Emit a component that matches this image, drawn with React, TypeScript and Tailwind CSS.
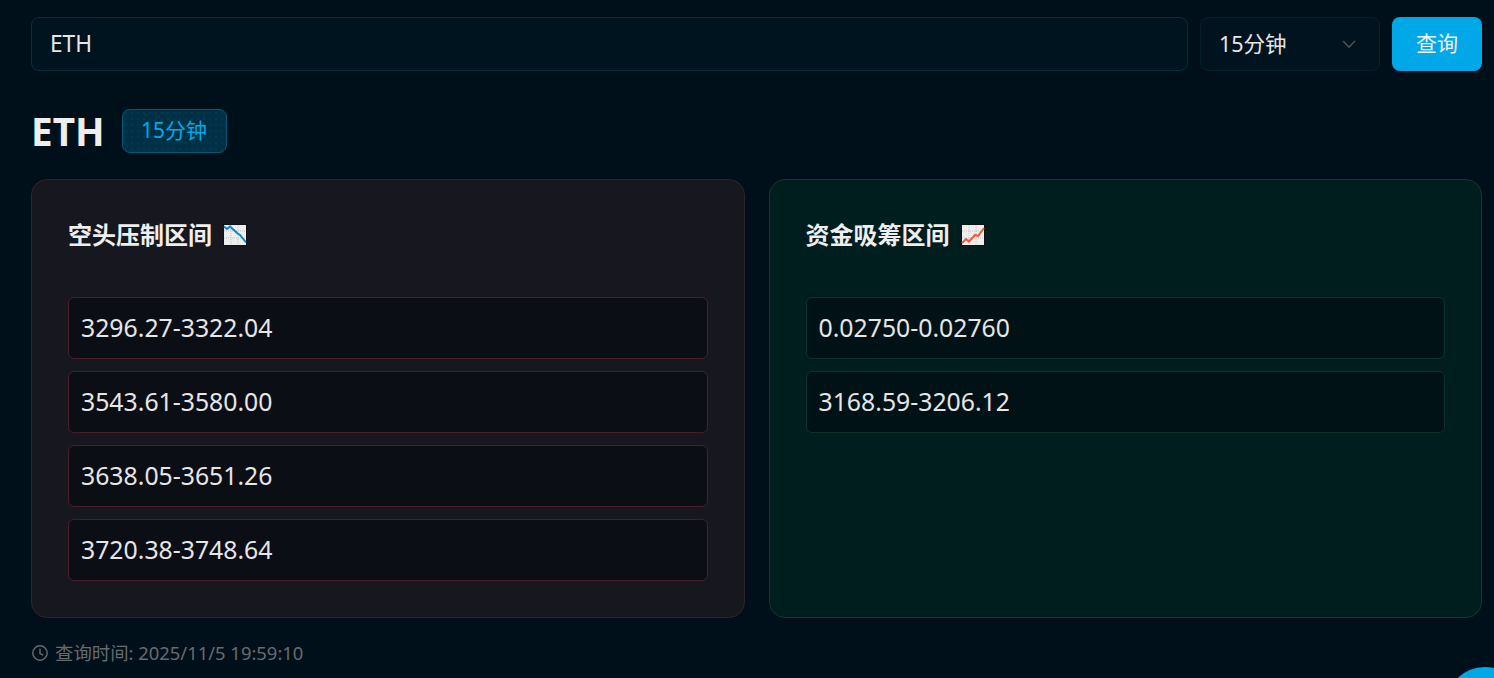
const FONT = "font-['Noto_Sans','Noto_Sans_CJK_SC',sans-serif]";

const shortRanges = ['3296.27-3322.04', '3543.61-3580.00', '3638.05-3651.26', '3720.38-3748.64'];
const longRanges = ['0.02750-0.02760', '3168.59-3206.12'];

function ChartIcon({ up }: { up?: boolean }) {
    return (
        <svg width="24" height="24" viewBox="0 0 24 24" className="shrink-0">
            <rect x="0" y="1" width="24" height="22" fill="#0d0f16" />
            <rect x="1" y="2" width="22" height="20" fill="#eeeeee" />
            <path d="M1 8H23M1 15H23M8 2V22M15 2V22" stroke="#c4c4c4" strokeWidth="1" strokeDasharray="1 1" fill="none" />
            {up ? (
                <path d="M1 20L5 16L8 18.5L14 12L17 13L23 5" stroke="#ee5a3c" strokeWidth="2" fill="none" />
            ) : (
                <path d="M1 3.5L4 6L7 3.5L12 8L14 10L17 12L23 19.5" stroke="#0b86c6" strokeWidth="2" fill="none" />
            )}
        </svg>
    );
}

function RangeCard({
    title,
    ranges,
    up,
}: {
    title: string;
    ranges: string[];
    up?: boolean;
}) {
    return (
        <div
            className={`flex-1 h-[439px] rounded-2xl border px-9 pt-[36px] ${
                up ? 'bg-[#011e1f] border-[#0c3a2d]' : 'bg-[#17171f] border-[#38202a]'
            }`}
        >
            <div className="flex items-center gap-[11px] h-[38px] text-[24px] font-bold text-[#eeeeee]">
                <span>{title}</span>
                <ChartIcon up={up} />
            </div>
            <div className="mt-[43px] flex flex-col gap-3">
                {ranges.map((range) => (
                    <div
                        key={range}
                        className={`h-[62px] flex items-center rounded-md border px-3 text-[24.8px] text-[#e6e6e6] ${
                            up ? 'bg-[#001215] border-[#0b3327]' : 'bg-[#0c0e15] border-[#4a1f2b]'
                        }`}
                    >
                        {range}
                    </div>
                ))}
            </div>
        </div>
    );
}

export default function App() {
    return (
        <div className={`${FONT} relative h-[678px] overflow-hidden bg-[#00101b] pl-[31px] pr-3 pt-[17px]`}>
            <div className="flex gap-3 h-[54px]">
                <div className="flex-1 flex items-center rounded-lg border border-[#01323c] bg-[#00141f] px-[18px] text-[22.7px] text-[#e6e6e6]">
                    ETH
                </div>
                <div className="w-[180px] flex items-center justify-between rounded-lg border border-[#00222a] bg-[#00131e] pl-[18px] pr-[22px] text-[21.5px] text-[#e6e6e6]">
                    <span>15分钟</span>
                    <svg width="16" height="16" viewBox="0 0 16 16" fill="none" stroke="#4a4f54" strokeWidth="1.6">
                        <path d="M2 5L8 11L14 5" />
                    </svg>
                </div>
                <button className="w-[90px] rounded-lg bg-[#00a8e8] text-[21px] text-[#f2f2f2]">查询</button>
            </div>

            <div className="mt-[38px] flex items-center gap-[17px] h-[44px]">
                <h1 className="text-[38.7px] font-bold text-[#eeeeee]">ETH</h1>
                <span className="h-[44px] w-[105px] flex items-center justify-center rounded-lg border border-[#005a7a] bg-[#003045] bg-[radial-gradient(#013a50_1px,transparent_1px)] bg-[length:6px_6px] text-[21px] text-[#00a8e8]">
                    15分钟
                </span>
            </div>

            <div className="mt-[26px] flex gap-6">
                <RangeCard title="空头压制区间" ranges={shortRanges} />
                <RangeCard title="资金吸筹区间" ranges={longRanges} up />
            </div>

            <div className="mt-[21px] flex items-center gap-[7px] text-[18.4px] text-[#666b6f]">
                <svg width="16" height="16" viewBox="0 0 16 16" fill="none" stroke="#666b6f" strokeWidth="1.4" className="ml-px">
                    <circle cx="8" cy="8" r="7.2" />
                    <path d="M8 3.6V8.5L11.2 10.2" />
                </svg>
                <span>查询时间: 2025/11/5 19:59:10</span>
            </div>

            <div className="absolute left-[1445px] top-[667px] h-20 w-20 rounded-full bg-[#00a8e8]" />
        </div>
    );
}
